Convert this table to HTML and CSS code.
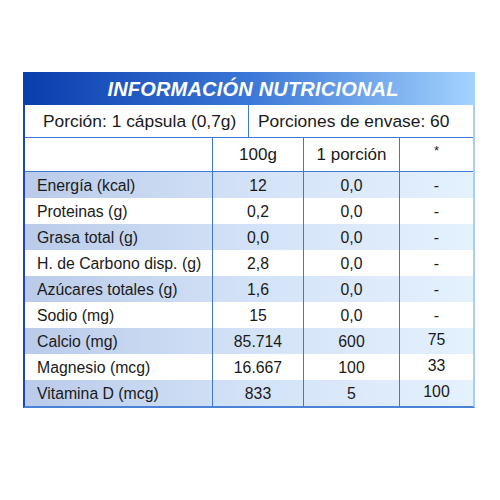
FILE: index.html
```html
<!DOCTYPE html>
<html lang="es">
<head>
  <meta charset="UTF-8">
  <meta name="viewport" content="width=device-width, initial-scale=1.0">
  <title>Información nutricional</title>
  <link rel="stylesheet" href="styles.css">
</head>
<body>
  <div class="panel">
    <!-- Titulo -->
    <div class="title">INFORMACIÓN NUTRICIONAL</div>

    <!-- Porciones -->
    <div class="serving">
      <div class="serving-size">Porción: 1 cápsula (0,7g)</div>
      <div class="serving-count">Porciones de envase: 60</div>
    </div>

    <!-- Cabecera columnas -->
    <div class="row head">
      <div class="cell name"></div>
      <div class="cell">100g</div>
      <div class="cell">1 porción</div>
      <div class="cell star">*</div>
    </div>

    <!-- Filas -->
    <div class="row shade">
      <div class="cell name">Energía (kcal)</div>
      <div class="cell">12</div>
      <div class="cell">0,0</div>
      <div class="cell">-</div>
    </div>
    <div class="row">
      <div class="cell name">Proteinas (g)</div>
      <div class="cell">0,2</div>
      <div class="cell">0,0</div>
      <div class="cell">-</div>
    </div>
    <div class="row shade">
      <div class="cell name">Grasa total (g)</div>
      <div class="cell">0,0</div>
      <div class="cell">0,0</div>
      <div class="cell">-</div>
    </div>
    <div class="row">
      <div class="cell name">H. de Carbono disp. (g)</div>
      <div class="cell">2,8</div>
      <div class="cell">0,0</div>
      <div class="cell">-</div>
    </div>
    <div class="row shade">
      <div class="cell name">Azúcares totales (g)</div>
      <div class="cell">1,6</div>
      <div class="cell">0,0</div>
      <div class="cell">-</div>
    </div>
    <div class="row">
      <div class="cell name">Sodio (mg)</div>
      <div class="cell">15</div>
      <div class="cell">0,0</div>
      <div class="cell">-</div>
    </div>
    <div class="row shade">
      <div class="cell name">Calcio (mg)</div>
      <div class="cell">85.714</div>
      <div class="cell">600</div>
      <div class="cell up">75</div>
    </div>
    <div class="row">
      <div class="cell name">Magnesio (mcg)</div>
      <div class="cell">16.667</div>
      <div class="cell">100</div>
      <div class="cell up">33</div>
    </div>
    <div class="row shade">
      <div class="cell name">Vitamina D (mcg)</div>
      <div class="cell">833</div>
      <div class="cell">5</div>
      <div class="cell up">100</div>
    </div>
  </div>
</body>
</html>
```

FILE: styles.css
```css
body {
  margin: 0;
  background: #fff;
  font-family: "Liberation Sans", Arial, sans-serif;
  color: #1a1a1a;
}

.panel {
  width: 448px;
  margin: 72px 0 0 23px;
  border-left: 2px solid #1747b8;
  border-right: 2px solid #a6cef6;
  border-bottom: 2px solid #4a82d8;
}

.title {
  height: 33px;
  margin-left: -2px;
  margin-right: -2px;
  padding-left: 8px;
  background: linear-gradient(to right, #0a3dad 0%, #3b77d6 50%, #a3d3ff 100%);
  color: #fff;
  font-size: 20px;
  font-weight: bold;
  font-style: italic;
  letter-spacing: 0.2px;
  line-height: 35px;
  text-align: center;
}

.serving {
  display: grid;
  grid-template-columns: 223px 225px;
  height: 32px;
  border-bottom: 1px solid #3d7ad8;
  font-size: 17.4px;
  line-height: 32px;
}

.serving-size {
  padding-left: 18px;
}

.serving-count {
  border-left: 1px solid #3d7ad8;
  padding-left: 9px;
}

.row {
  display: grid;
  grid-template-columns: 187px 91px 96px 74px;
  height: 26px;
  font-size: 15.8px;
  line-height: 27px;
}

.row.head {
  height: 33px;
  font-size: 17px;
  line-height: 33px;
  border-bottom: 1px solid #3d7ad8;
}

.row.shade {
  background: linear-gradient(to right, #bacbea 0%, #d3e2f7 50%, #e4f1fe 100%);
}

.cell {
  text-align: center;
  border-left: 1px solid #3d7ad8;
}

.cell.name {
  border-left: none;
  text-align: left;
  padding-left: 12px;
}

.cell.star {
  font-size: 13px;
  line-height: 26px;
}

.cell.up {
  line-height: 23px;
}
```
